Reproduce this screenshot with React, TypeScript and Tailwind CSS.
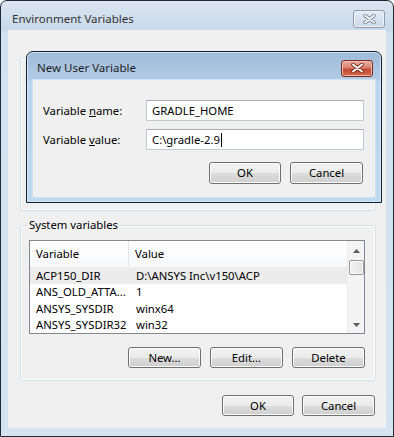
import React from "react";

const btn =
  "flex items-center justify-center rounded-[3px] border border-[#707070] bg-[linear-gradient(#f2f2f2_0%,#ebebeb_50%,#dddddd_50%,#cfcfcf_100%)] shadow-[inset_0_0_0_1px_#fcfcfc] text-black";

const rows = [
  ["ACP150_DIR", "D:\\ANSYS Inc\\v150\\ACP"],
  ["ANS_OLD_ATTA...", "1"],
  ["ANSYS_SYSDIR", "winx64"],
  ["ANSYS_SYSDIR32", "win32"],
];

function CloseGlyph({ outline, fill }: { outline: string; fill: string }) {
  return (
    <svg width="13" height="10" viewBox="0 0 13 10">
      <path d="M2 1.5 L11 8.5 M11 1.5 L2 8.5" stroke={outline} strokeWidth="3.6" strokeLinecap="round" />
      <path d="M2 1.5 L11 8.5 M11 1.5 L2 8.5" stroke={fill} strokeWidth="1.8" strokeLinecap="round" />
    </svg>
  );
}

function Arrow({ up }: { up?: boolean }) {
  return (
    <svg width="7" height="4" viewBox="0 0 7 4">
      <path d={up ? "M0 4 L3.5 0 L7 4 Z" : "M0 0 L7 0 L3.5 4 Z"} fill="#5a5a5a" />
    </svg>
  );
}

export default function App() {
  return (
    <div className="relative w-[394px] h-[437px] font-['Noto_Sans',sans-serif] text-[11.3px] leading-none text-black select-none">
      {/* Environment Variables window (inactive) */}
      <div className="flex flex-col w-full h-full rounded-t-[7px] border border-[#1d2a36] bg-[linear-gradient(#dbe5f0_0px,#c8d8ea_30px,#d3e1f0_31px,#d6e4f2_100%)]">
        <div className="flex items-center justify-between h-[29px] pt-[7px] pl-[11px] pr-[8px]">
          <span className="text-[#333] text-[11.5px]">Environment Variables</span>
          <div className="flex items-center justify-center w-[32px] h-[18px] rounded-[3px] border border-[#8e9cad] bg-[linear-gradient(#e4ecf5,#ccd9e8)] shadow-[inset_0_0_0_1px_#eef3f9]">
            <CloseGlyph outline="#7e8b99" fill="#f4f7fb" />
          </div>
        </div>
        <div className="flex flex-col mx-[7px] h-[398px] bg-[#f0f0f0]">
          <div className="ml-[12px] mt-[27px] w-[356px] h-[154px] rounded-[3px] border border-[#d5dfe5] shadow-[inset_0_0_0_1px_#fff]" />

          <div className="relative ml-[12px] mt-[14px] w-[356px] h-[156px] rounded-[3px] border border-[#d5dfe5] shadow-[inset_0_0_0_1px_#fff] pt-[14px] pl-[8px]">
            <span className="absolute left-[6px] top-[-7px] bg-[#f0f0f0] px-[2px]">System variables</span>
            <div className="flex w-[336px] h-[94px] border border-[#828790] bg-white overflow-hidden">
              <div className="flex flex-col flex-1">
                <div className="flex h-[26px] items-start bg-[linear-gradient(#ffffff,#f7f8fa)]">
                  <div className="h-full w-[99px] pl-[6px] pt-[7px] border-r border-[#e5e5e5]">Variable</div>
                  <div className="pl-[6px] pt-[7px]">Value</div>
                </div>
                {rows.map(([k, v], i) => (
                  <div
                    key={k}
                    className={`flex items-center h-[16.5px] ${i === 0 ? "bg-[#ececec]" : ""}`}
                  >
                    <div className="w-[99px] pl-[6px] whitespace-nowrap">{k}</div>
                    <div className="pl-[7px] whitespace-nowrap">{v}</div>
                  </div>
                ))}
              </div>
              <div className="flex flex-col items-center w-[17px] bg-[#f4f4f4] border-l border-[#ececec]">
                <div className="flex items-center justify-center h-[19px] w-full">
                  <Arrow up />
                </div>
                <div className="w-[15px] h-[15px] rounded-[2px] border border-[#979797] bg-[linear-gradient(90deg,#f2f2f2,#e2e2e2)] shadow-[inset_0_0_0_1px_#fbfbfb]" />
                <div className="flex-1" />
                <div className="flex items-center justify-center h-[17px] w-full">
                  <Arrow />
                </div>
              </div>
            </div>
            <div className="flex justify-end gap-[9px] mt-[13px] pr-[10px]">
              <div className={`${btn} w-[73px] h-[21px]`}>New...</div>
              <div className={`${btn} w-[73px] h-[21px]`}>Edit...</div>
              <div className={`${btn} w-[73px] h-[21px]`}>Delete</div>
            </div>
          </div>

          <div className="flex justify-end gap-[8px] mt-[14px] pr-[11px]">
            <div className={`${btn} w-[72px] h-[21px]`}>OK</div>
            <div className={`${btn} w-[73px] h-[21px]`}>Cancel</div>
          </div>
        </div>
      </div>

      {/* New User Variable dialog (active) */}
      <div className="absolute left-[26px] top-[51px] flex flex-col w-[356px] h-[152px] rounded-t-[7px] border border-[#12202e] bg-[linear-gradient(#9fbbd9_0px,#b3cce6_28px,#b9d4ec_29px,#bcdaf0_100%)] shadow-[inset_0_0_0_1px_#d6e6f4]">
        <div className="flex items-center justify-between h-[28px] pt-[4px] pl-[10px] pr-[8px]">
          <span className="text-[#1e1e1e] text-[11.5px]">New User Variable</span>
          <div className="flex items-center justify-center w-[32px] h-[17px] rounded-[3px] border border-[#7a2c22] bg-[linear-gradient(#eab0a3_0%,#d9806d_45%,#c44a33_55%,#d0694b_100%)] shadow-[inset_0_0_0_1px_#eeb7aa]">
            <CloseGlyph outline="#7b2a1c" fill="#ffffff" />
          </div>
        </div>
        <div className="flex flex-col mx-[6px] h-[117px] bg-[#f0f0f0] shadow-[0_0_0_1px_#cfe1f1]">
          <div className="flex items-center mt-[20px] h-[21px]">
            <span className="w-[113px] pl-[10px]">
              Variable <u>n</u>ame:
            </span>
            <div className="flex items-center w-[218px] h-[21px] pl-[5px] bg-white border border-[#c5cbd2] border-t-[#abadb3]">
              GRADLE_HOME
            </div>
          </div>
          <div className="flex items-center mt-[8px] h-[21px]">
            <span className="w-[113px] pl-[10px]">
              Variable <u>v</u>alue:
            </span>
            <div className="flex items-center w-[218px] h-[21px] pl-[5px] bg-white border border-[#c5cbd2] border-t-[#abadb3]">
              C:\gradle-2.9
              <span className="ml-[1px] w-[1px] h-[14px] bg-black" />
            </div>
          </div>
          <div className="flex justify-end gap-[9px] mt-[12px] pr-[12px]">
            <div className={`${btn} w-[72px] h-[22px] border-[#3c7fb1] bg-[linear-gradient(#f1f6fa_0%,#e8eff5_50%,#dbe4ec_50%,#d0dce6_100%)] shadow-[inset_0_0_0_1px_#8fd0f6]`}>
              OK
            </div>
            <div className={`${btn} w-[73px] h-[22px]`}>Cancel</div>
          </div>
        </div>
      </div>
    </div>
  );
}
